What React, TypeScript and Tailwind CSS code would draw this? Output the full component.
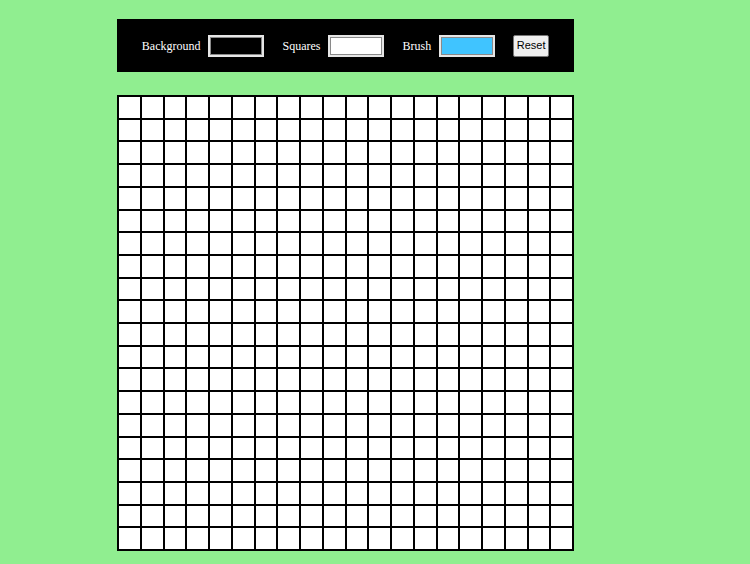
import React from "react";

const cells = Array.from({ length: 400 }, (_, i) => i);

function Swatch({ color }: { color: string }) {
  return (
    <div className="w-[56px] h-[22px] bg-[#e6e6e6] p-[2px]">
      <div className={`w-full h-full border border-[#8a8a8a] ${color}`} />
    </div>
  );
}

export default function App() {
  return (
    <div className="min-h-[564px] w-full bg-[#90ee90] pt-[19px] pl-[117px]">
      {/* Toolbar */}
      <div
        className="w-[457px] h-[53px] bg-black flex items-center justify-center text-white text-[12px]"
        style={{ fontFamily: '"Liberation Serif", "Times New Roman", serif' }}
      >
        <span className="mr-[8px]">Background</span>
        <Swatch color="bg-black" />
        <span className="ml-[18px] mr-[8px]">Squares</span>
        <Swatch color="bg-white" />
        <span className="ml-[18px] mr-[8px]">Brush</span>
        <Swatch color="bg-[#40c4ff]" />
        <button
          className="ml-[18px] w-[36px] h-[22px] bg-[#efefef] border border-[#767676] rounded-[2px] text-black text-[11px] leading-none"
          style={{ fontFamily: '"Liberation Sans", Arial, sans-serif' }}
        >
          Reset
        </button>
      </div>

      {/* Grid */}
      <div className="mt-[23px] w-[457px] h-[456px] border border-black grid grid-cols-20 grid-rows-20">
        {cells.map((i) => (
          <div key={i} className="border border-black bg-white" />
        ))}
      </div>
    </div>
  );
}
